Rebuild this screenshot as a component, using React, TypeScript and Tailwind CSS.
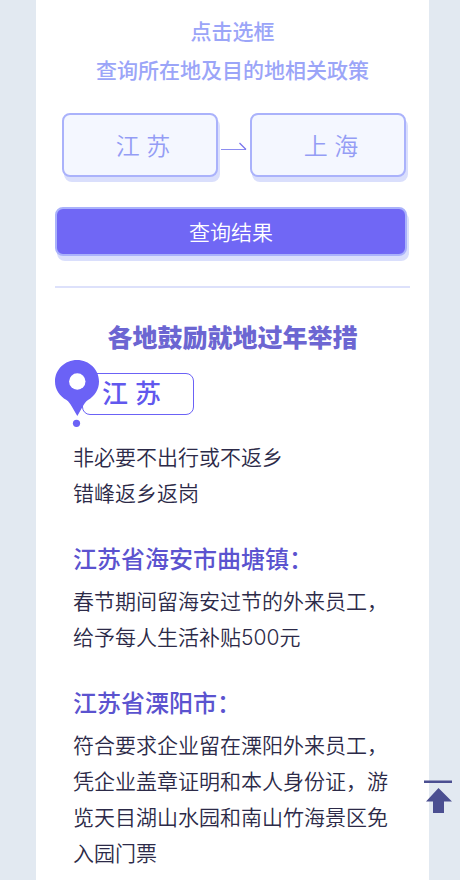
import { useState } from "react";

type Policy = {
  place?: string;
  lines: string[];
};

const regions = ["江 苏", "上 海"];

const policies: Policy[] = [
  { lines: ["非必要不出行或不返乡", "错峰返乡返岗"] },
  { place: "江苏省海安市曲塘镇：", lines: ["春节期间留海安过节的外来员工，给予每人生活补贴500元"] },
  {
    place: "江苏省溧阳市：",
    lines: ["符合要求企业留在溧阳外来员工，凭企业盖章证明和本人身份证，游览天目湖山水园和南山竹海景区免入园门票"],
  },
];

type RegionSelectProps = {
  label: string;
  value: string;
  onChange: (value: string) => void;
};

function RegionSelect({ label, value, onChange }: RegionSelectProps) {
  return (
    <select
      aria-label={label}
      value={value}
      onChange={(event) => onChange(event.target.value)}
      className="h-16 min-w-0 flex-1 appearance-none rounded-lg border-2 border-[#aab2fb] bg-[#f4f7ff] pt-1 pl-1.5 text-center text-2xl font-[350] text-[#949df5] shadow-[2px_5px_0_#dadffc] [text-align-last:center]"
    >
      {regions.map((region) => (
        <option key={region} value={region}>
          {region}
        </option>
      ))}
    </select>
  );
}

function RegionBadge({ name }: { name: string }) {
  return (
    <div className="mt-1 flex items-start">
      <svg className="relative z-10 h-[67px] w-11 shrink-0" viewBox="0 0 44 67" aria-hidden="true">
        <path
          fill="#6b62f6"
          d="M22 0C34.2 0 44 9.6 44 21.5C44 29.5 39.8 36 33 40C30.5 41.5 29.5 43.5 28 46L22.3 56L16.5 46C15 43.5 13.8 41.5 11.5 40C4.5 36 0 29.5 0 21.5C0 9.6 9.8 0 22 0Z"
        />
        <circle cx="22.3" cy="21.5" r="8.2" fill="#fff" />
        <circle cx="21.5" cy="63.3" r="3.6" fill="#6b62f6" />
      </svg>
      <h3 className="-ml-[17px] mt-[13px] h-[42px] w-28 rounded-lg border border-[#6b62f6] pl-[19px] text-[26px] leading-10 font-medium text-[#6158ee]">
        {name}
      </h3>
    </div>
  );
}

export default function App() {
  const [from, setFrom] = useState("江 苏");
  const [to, setTo] = useState("上 海");

  return (
    <div
      lang="zh-CN"
      className="min-h-screen bg-[#e2e9f1] pr-[31px] pl-9 font-['Inter','Liberation_Sans','Noto_Sans_CJK_SC',sans-serif]"
    >
      <main className="min-h-screen bg-white px-[19px] pt-3 pb-2">
        <p className="text-center text-[21px] leading-[39px] font-medium text-[#9ba5f8]">
          点击选框
          <br />
          查询所在地及目的地相关政策
        </p>

        <div className="mt-[23px] flex items-center pr-1 pl-[7px]">
          <RegionSelect label="所在地" value={from} onChange={setFrom} />
          <svg className="mx-[3px] h-3 w-[26px] shrink-0" viewBox="0 0 26 12" fill="none" aria-hidden="true">
            <path d="M0 10.5H25" stroke="#8c8df0" />
            <path d="M18.5 4L25 10.5" stroke="#7772ec" strokeWidth="1.3" />
          </svg>
          <RegionSelect label="目的地" value={to} onChange={setTo} />
        </div>

        <div className="mt-[30px] pr-[3px]">
          <button
            type="button"
            className="h-[49px] w-full rounded-lg border-2 border-[#aab2fb] bg-[#7067f5] pt-0.5 text-[21px] font-[350] text-white shadow-[2px_5px_0_#dadffc]"
          >
            查询结果
          </button>
        </div>

        <hr className="mt-[30px] border-t-2 border-[#dde1fb]" />

        <h2 className="mt-8 text-center text-[25px] leading-9 font-black text-[#6c66d2]">
          各地鼓励就地过年举措
        </h2>

        <RegionBadge name="江 苏" />

        <div className="mt-[13px] space-y-6 pr-4 pl-[18px]">
          {policies.map((policy) => (
            <section key={policy.lines[0]}>
              {policy.place && (
                <h4 className="text-2xl leading-[48px] font-medium text-[#5b53cf]">{policy.place}</h4>
              )}
              {policy.lines.map((line) => (
                <p key={line} className="text-[21px] leading-9 font-[350] text-[#2c2a48]">
                  {line}
                </p>
              ))}
            </section>
          ))}
        </div>
      </main>

      <button type="button" aria-label="返回顶部" className="fixed right-2 bottom-[66px]">
        <svg className="block h-[34px] w-7" viewBox="0 0 28 34" fill="#4b4f91" aria-hidden="true">
          <path d="M0 0.5H28V3H0ZM14.5 8L28 21.5H20V33H9V21.5H2Z" />
        </svg>
      </button>
    </div>
  );
}
